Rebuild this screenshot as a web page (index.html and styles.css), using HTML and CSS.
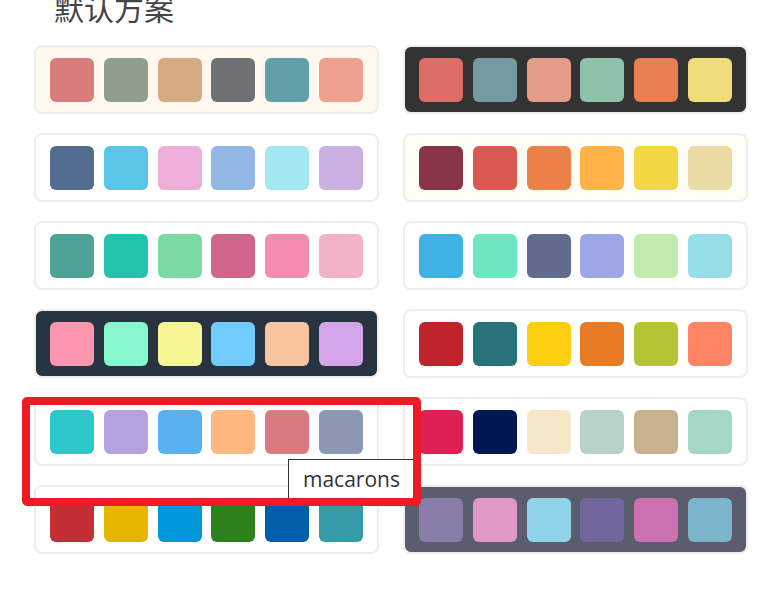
FILE: index.html
```html
<!DOCTYPE html>
<html lang="zh-CN">
<head>
  <meta charset="UTF-8">
  <meta name="viewport" content="width=device-width, initial-scale=1.0">
  <title>默认方案</title>
  <link rel="stylesheet" href="styles.css">
</head>
<body>

  <div id="theme-panel">
    <h2 class="panel-title">默认方案</h2>
    <div id="theme-grid"></div>
  </div>

  <script>
    const themes = [
      { name: "vintage", bg: "#fef8ef", colors: ["#d87c7c", "#919e8b", "#d7ab82", "#6e7074", "#61a0a8", "#efa18d"] },
      { name: "dark", bg: "#333333", colors: ["#dd6b66", "#759aa0", "#e69d87", "#8dc1a9", "#ea7e53", "#eedd78"] },
      { name: "westeros", bg: "#ffffff", colors: ["#516b91", "#59c4e6", "#edafda", "#93b7e3", "#a5e7f0", "#cbb0e3"] },
      { name: "essos", bg: "#fefdf5", colors: ["#893448", "#d95850", "#eb8146", "#ffb248", "#f2d643", "#ebdba4"] },
      { name: "wonderland", bg: "#ffffff", colors: ["#4ea397", "#22c3aa", "#7bd9a5", "#d0648a", "#f58db2", "#f2b3c9"] },
      { name: "walden", bg: "#ffffff", colors: ["#3fb1e3", "#6be6c1", "#626c91", "#a0a7e6", "#c4ebad", "#96dee8"] },
      { name: "chalk", bg: "#293441", colors: ["#fc97af", "#87f7cf", "#f7f494", "#72ccff", "#f7c5a0", "#d4a4eb"] },
      { name: "infographic", bg: "#ffffff", colors: ["#c1232b", "#27727b", "#fcce10", "#e87c25", "#b5c334", "#fe8463"] },
      { name: "macarons", bg: "#ffffff", colors: ["#2ec7c9", "#b6a2de", "#5ab1ef", "#ffb980", "#d87a80", "#8d98b3"] },
      { name: "roma", bg: "#ffffff", colors: ["#e01f54", "#001852", "#f5e8c8", "#b8d2c7", "#c6b38e", "#a4d8c2"] },
      { name: "shine", bg: "#ffffff", colors: ["#c12e34", "#e6b600", "#0098d9", "#2b821d", "#005eaa", "#339ca8"] },
      { name: "purple-passion", bg: "#5b5c6e", colors: ["#8a7ca8", "#e098c7", "#8fd3e8", "#71669e", "#cc70af", "#7cb4cc"] }
    ];

    const grid = document.getElementById("theme-grid");

    themes.forEach(theme => {
      const card = document.createElement("div");
      card.className = "theme-card";
      card.style.backgroundColor = theme.bg;

      const row = document.createElement("div");
      row.className = "swatches";
      theme.colors.forEach(color => {
        const swatch = document.createElement("span");
        swatch.className = "swatch";
        swatch.style.backgroundColor = color;
        row.appendChild(swatch);
      });
      card.appendChild(row);

      // hovered theme shows its name
      if (theme.name === "macarons") {
        card.classList.add("hovered");
        const tip = document.createElement("div");
        tip.className = "theme-tip";
        tip.textContent = theme.name;
        card.appendChild(tip);

        const mark = document.createElement("div");
        mark.className = "highlight";
        card.appendChild(mark);
      }

      grid.appendChild(card);
    });
  </script>

</body>
</html>
```

FILE: styles.css
```css
body {
  margin: 0;
  background: #fff;
  font-family: "Open Sans", "Noto Sans CJK SC", sans-serif;
  overflow: hidden;
}

#theme-panel {
  padding: 0 33px 0 34px;
}

.panel-title {
  margin: -13px 0 18px 20px;
  font-family: "Noto Sans CJK SC", sans-serif;
  font-size: 30px;
  line-height: 40px;
  font-weight: 400;
  color: #444;
}

#theme-grid {
  display: grid;
  grid-template-columns: 345px 345px;
  column-gap: 24px;
  row-gap: 19px;
}

.theme-card {
  position: relative;
  border: 2px solid #eee;
  border-radius: 8px;
  padding: 11px 14px 10px 14px;
}

.swatches {
  display: flex;
  justify-content: space-between;
}

.swatch {
  display: block;
  width: 44px;
  height: 44px;
  border-radius: 6px;
}

.theme-tip {
  position: absolute;
  left: 252px;
  top: 60px;
  z-index: 2;
  padding: 4px 14px 8px 14px;
  background: #fff;
  border: 1px solid #333;
  color: #333;
  font-size: 21px;
  line-height: 30px;
  white-space: nowrap;
}

.highlight {
  position: absolute;
  left: -14px;
  top: -2px;
  z-index: 3;
  width: 383px;
  height: 93px;
  border: 8px solid #ed1c24;
  border-radius: 5px;
}
```
